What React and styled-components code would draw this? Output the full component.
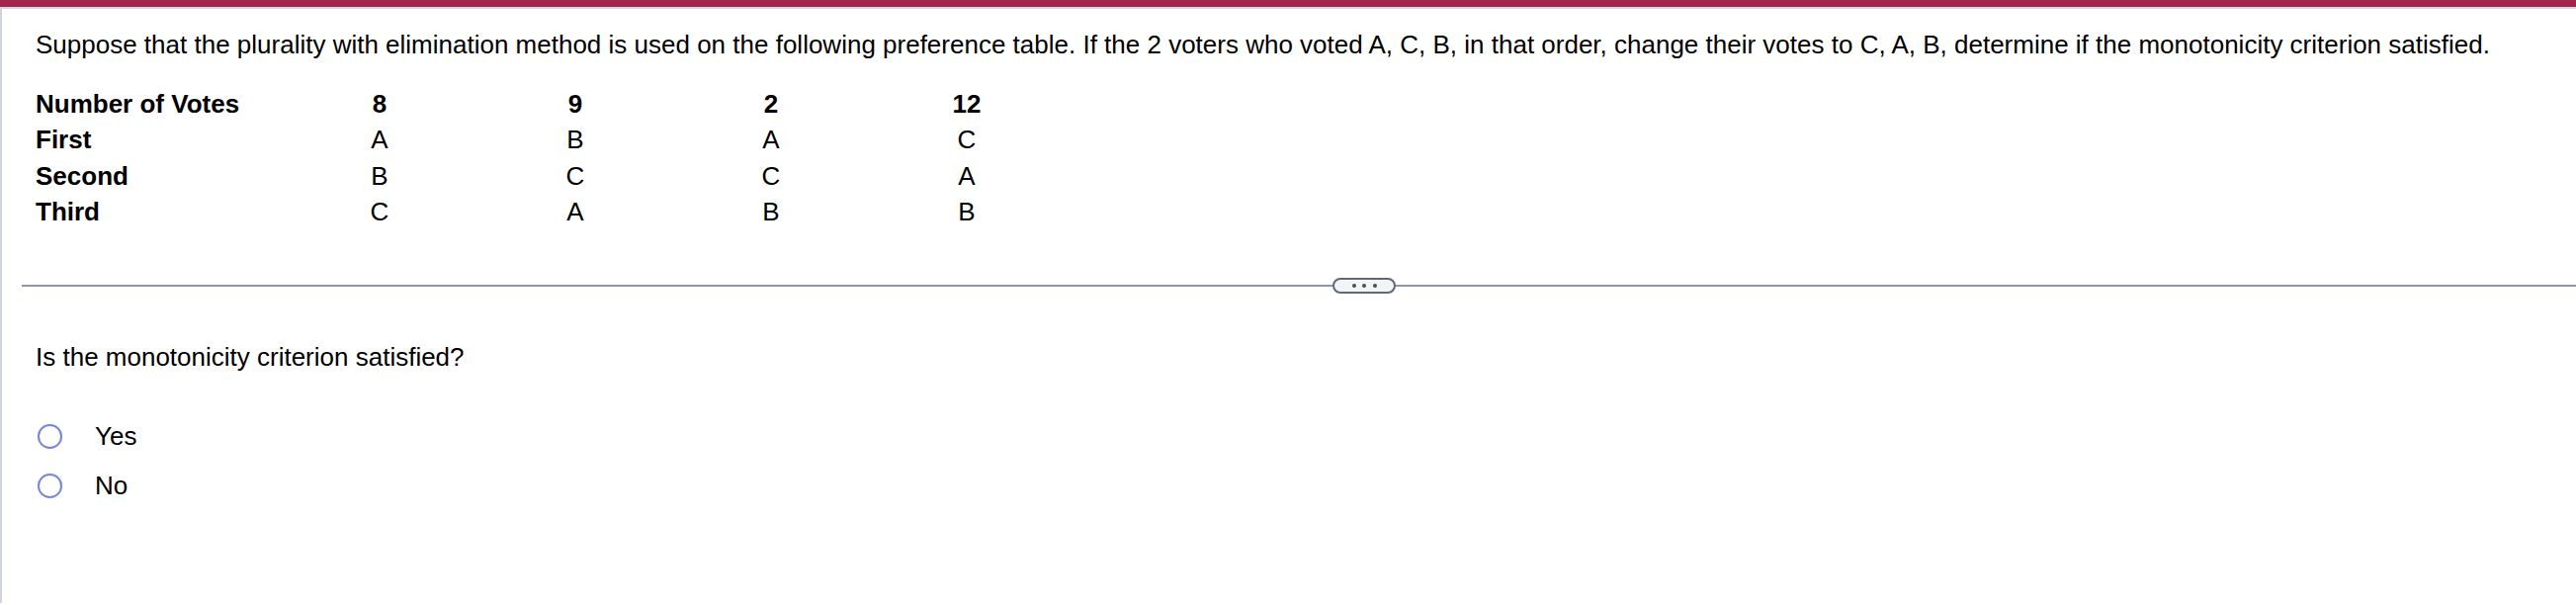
import React from "react";
import styled, { createGlobalStyle } from "styled-components";

const GlobalStyle = createGlobalStyle`
  html, body {
    margin: 0;
    padding: 0;
    background: #ffffff;
  }
  body {
    font-family: "Liberation Sans", Arial, Helvetica, sans-serif;
    color: #000;
  }
`;

const Frame = styled.div`
  border-top: 7px solid #a3244c;
  min-height: 100vh;
  box-sizing: border-box;
`;

const Body = styled.div`
  border-top: 2px solid #d4d7e0;
  border-left: 2px solid #d0d4e0;
  min-height: 603px;
  box-sizing: border-box;
  padding: 18px 0 0 20px;
  font-size: 26px;
  line-height: 36px;
`;

const Block = styled.div`
  padding-left: 14px;
`;

const Prompt = styled.p`
  margin: 0 0 24px;
`;

const Table = styled.div`
  display: grid;
  grid-template-columns: 249px repeat(4, 198px);
  line-height: 36.3px;
`;

const Cell = styled.div`
  font-weight: ${(p) => (p.bold ? 700 : 400)};
  text-align: ${(p) => (p.label ? "left" : "center")};
`;

const Divider = styled.div`
  display: grid;
  grid-template-columns: 1326px 64px 1fr;
  align-items: center;
  margin: 49px 0 46px;
`;

const Rule = styled.div`
  height: 2px;
  background: #8f96a3;
`;

const Pill = styled.button`
  box-sizing: border-box;
  width: 64px;
  height: 16px;
  padding: 0;
  border: 2px solid #5f6878;
  border-radius: 8px;
  background: #f2f4f7;
  display: flex;
  align-items: center;
  justify-content: center;
  gap: 6.5px;
`;

const Dot = styled.span`
  width: 4px;
  height: 4px;
  border-radius: 50%;
  background: #4a4d52;
`;

const Question = styled.p`
  margin: 0 0 44px;
`;

const Options = styled.div`
  display: flex;
  flex-direction: column;
  gap: 14px;
  padding-left: 2px;
`;

const Option = styled.label`
  display: flex;
  align-items: center;
  height: 36px;
`;

const Circle = styled.span`
  box-sizing: border-box;
  width: 25px;
  height: 25px;
  border-radius: 50%;
  border: 2px solid #7888d8;
  box-shadow: 0 0 1px rgba(110, 128, 214, 0.6);
  margin-right: 33px;
  margin-top: 1px;
`;

const rows = [
  { label: "Number of Votes", values: ["8", "9", "2", "12"], bold: true },
  { label: "First", values: ["A", "B", "A", "C"] },
  { label: "Second", values: ["B", "C", "C", "A"] },
  { label: "Third", values: ["C", "A", "B", "B"] },
];

export default function App() {
  return (
    <Frame>
      <GlobalStyle />
      <Body>
        <Block>
          <Prompt>
            Suppose that the plurality with elimination method is used on the
            following preference table. If the 2 voters who voted A, C, B, in
            that order, change their votes to C, A, B, determine if the
            monotonicity criterion satisfied.
          </Prompt>
          <Table>
            {rows.map((row) => (
              <React.Fragment key={row.label}>
                <Cell label bold>
                  {row.label}
                </Cell>
                {row.values.map((v, i) => (
                  <Cell key={i} bold={row.bold}>
                    {v}
                  </Cell>
                ))}
              </React.Fragment>
            ))}
          </Table>
        </Block>
        <Divider>
          <Rule />
          <Pill aria-label="more">
            <Dot />
            <Dot />
            <Dot />
          </Pill>
          <Rule />
        </Divider>
        <Block>
          <Question>Is the monotonicity criterion satisfied?</Question>
          <Options>
            <Option>
              <Circle />
              Yes
            </Option>
            <Option>
              <Circle />
              No
            </Option>
          </Options>
        </Block>
      </Body>
    </Frame>
  );
}
